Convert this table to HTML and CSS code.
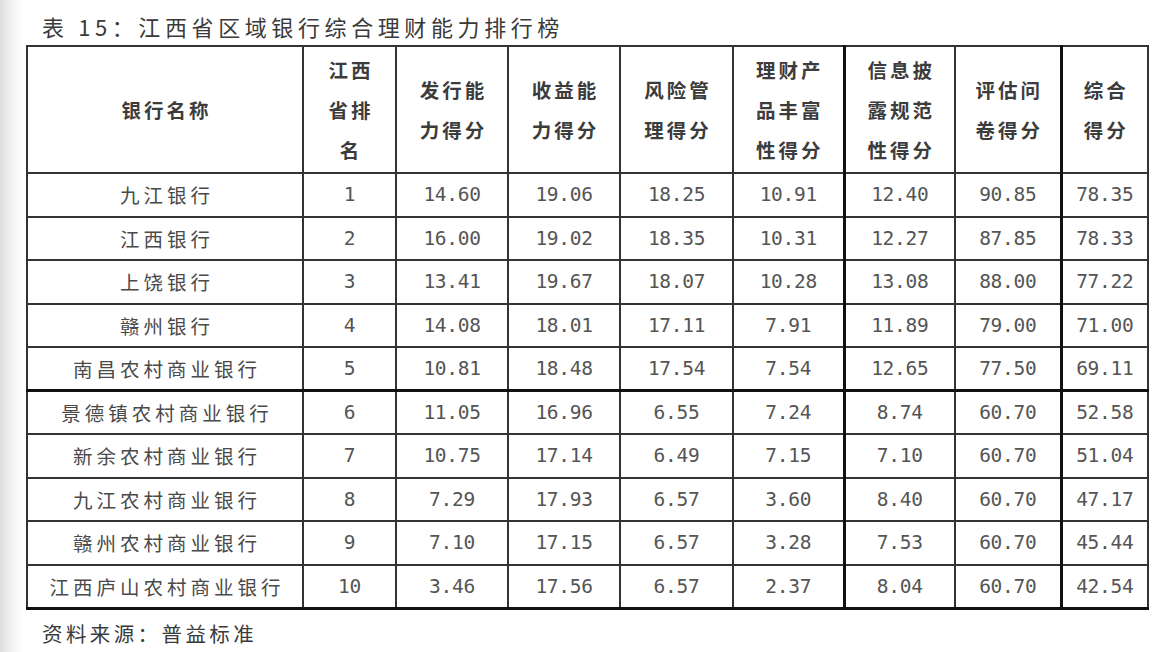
FILE: index.html
```html
<!DOCTYPE html>
<html lang="zh-CN">
<head>
<meta charset="utf-8">
<title>江西省区域银行综合理财能力排行榜</title>
<link rel="stylesheet" href="styles.css">
</head>
<body>
<div class="page">
  <p class="caption">表 15：江西省区域银行综合理财能力排行榜</p>
  <table class="rank">
    <colgroup>
      <col class="c-name"><col class="c-rank"><col class="c-w112"><col class="c-w112"><col class="c-w113"><col class="c-w111"><col class="c-w111"><col class="c-w106"><col class="c-w87">
    </colgroup>
    <thead>
      <tr>
        <th>银行名称</th>
        <th>江西<br>省排<br>名</th>
        <th>发行能<br>力得分</th>
        <th>收益能<br>力得分</th>
        <th>风险管<br>理得分</th>
        <th>理财产<br>品丰富<br>性得分</th>
        <th class="thick-l">信息披<br>露规范<br>性得分</th>
        <th>评估问<br>卷得分</th>
        <th class="thick-l">综合<br>得分</th>
      </tr>
    </thead>
    <tbody>
      <tr><td class="name">九江银行</td><td class="num">1</td><td class="num">14.60</td><td class="num">19.06</td><td class="num">18.25</td><td class="num">10.91</td><td class="num thick-l">12.40</td><td class="num">90.85</td><td class="num thick-l">78.35</td></tr>
      <tr><td class="name">江西银行</td><td class="num">2</td><td class="num">16.00</td><td class="num">19.02</td><td class="num">18.35</td><td class="num">10.31</td><td class="num thick-l">12.27</td><td class="num">87.85</td><td class="num thick-l">78.33</td></tr>
      <tr><td class="name">上饶银行</td><td class="num">3</td><td class="num">13.41</td><td class="num">19.67</td><td class="num">18.07</td><td class="num">10.28</td><td class="num thick-l">13.08</td><td class="num">88.00</td><td class="num thick-l">77.22</td></tr>
      <tr><td class="name">赣州银行</td><td class="num">4</td><td class="num">14.08</td><td class="num">18.01</td><td class="num">17.11</td><td class="num">7.91</td><td class="num thick-l">11.89</td><td class="num">79.00</td><td class="num thick-l">71.00</td></tr>
      <tr class="group-end"><td class="name">南昌农村商业银行</td><td class="num">5</td><td class="num">10.81</td><td class="num">18.48</td><td class="num">17.54</td><td class="num">7.54</td><td class="num thick-l">12.65</td><td class="num">77.50</td><td class="num thick-l">69.11</td></tr>
      <tr><td class="name">景德镇农村商业银行</td><td class="num">6</td><td class="num">11.05</td><td class="num">16.96</td><td class="num">6.55</td><td class="num">7.24</td><td class="num thick-l">8.74</td><td class="num">60.70</td><td class="num thick-l">52.58</td></tr>
      <tr><td class="name">新余农村商业银行</td><td class="num">7</td><td class="num">10.75</td><td class="num">17.14</td><td class="num">6.49</td><td class="num">7.15</td><td class="num thick-l">7.10</td><td class="num">60.70</td><td class="num thick-l">51.04</td></tr>
      <tr><td class="name">九江农村商业银行</td><td class="num">8</td><td class="num">7.29</td><td class="num">17.93</td><td class="num">6.57</td><td class="num">3.60</td><td class="num thick-l">8.40</td><td class="num">60.70</td><td class="num thick-l">47.17</td></tr>
      <tr><td class="name">赣州农村商业银行</td><td class="num">9</td><td class="num">7.10</td><td class="num">17.15</td><td class="num">6.57</td><td class="num">3.28</td><td class="num thick-l">7.53</td><td class="num">60.70</td><td class="num thick-l">45.44</td></tr>
      <tr class="group-end"><td class="name">江西庐山农村商业银行</td><td class="num">10</td><td class="num">3.46</td><td class="num">17.56</td><td class="num">6.57</td><td class="num">2.37</td><td class="num thick-l">8.04</td><td class="num">60.70</td><td class="num thick-l">42.54</td></tr>
    </tbody>
  </table>
  <p class="source">资料来源：普益标准</p>
</div>
</body>
</html>
```

FILE: styles.css
```css
html, body {
  margin: 0;
  padding: 0;
}

body {
  width: 1176px;
  height: 652px;
  overflow: hidden;
  background: linear-gradient(to right, #dcdcdc 0px, #ececec 8px, #f7f7f7 16px, #ffffff 24px);
  font-family: "Noto Sans CJK SC", "Noto Sans", sans-serif;
  color: #444;
}

.page {
  padding: 11px 0 0 26px;
}

.caption {
  margin: 0 0 4px 0;
  padding-left: 16px;
  height: 30px;
  line-height: 30px;
  font-size: 22px;
  letter-spacing: 4.6px;
  color: #3a3a3a;
  font-weight: 400;
}

.rank {
  border-collapse: collapse;
  table-layout: fixed;
  width: 1121px;
  border: 2px solid #2a2a2a;
}

.c-name { width: 276px; }
.c-rank { width: 93px; }
.c-w112 { width: 112px; }
.c-w113 { width: 113px; }
.c-w111 { width: 111px; }
.c-w106 { width: 106px; }
.c-w87 { width: 87px; }

.rank th,
.rank td {
  border: 2px solid #333;
  padding: 0;
  text-align: center;
  vertical-align: middle;
}

.rank thead tr {
  height: 127px;
}

.rank th {
  font-size: 19.5px;
  line-height: 40px;
  font-weight: 700;
  letter-spacing: 3px;
  padding-left: 3px;
  color: #3c3c3c;
}

.rank tbody tr {
  height: 43.5px;
}

.rank td.name {
  font-size: 19.5px;
  letter-spacing: 4px;
  padding-left: 4px;
  font-weight: 400;
  color: #4a4a4a;
}

.rank td.num {
  font-family: "DejaVu Sans Mono", "Liberation Mono", monospace;
  font-size: 19.5px;
  letter-spacing: -0.3px;
  color: #555;
}

.rank .thick-l {
  border-left: 3px solid #111;
}

.rank tr.group-end td {
  border-bottom: 3px solid #111;
}

.source {
  margin: 8px 0 0 0;
  padding-left: 16px;
  height: 30px;
  line-height: 30px;
  font-size: 20.5px;
  letter-spacing: 3.4px;
  color: #3a3a3a;
}
```
